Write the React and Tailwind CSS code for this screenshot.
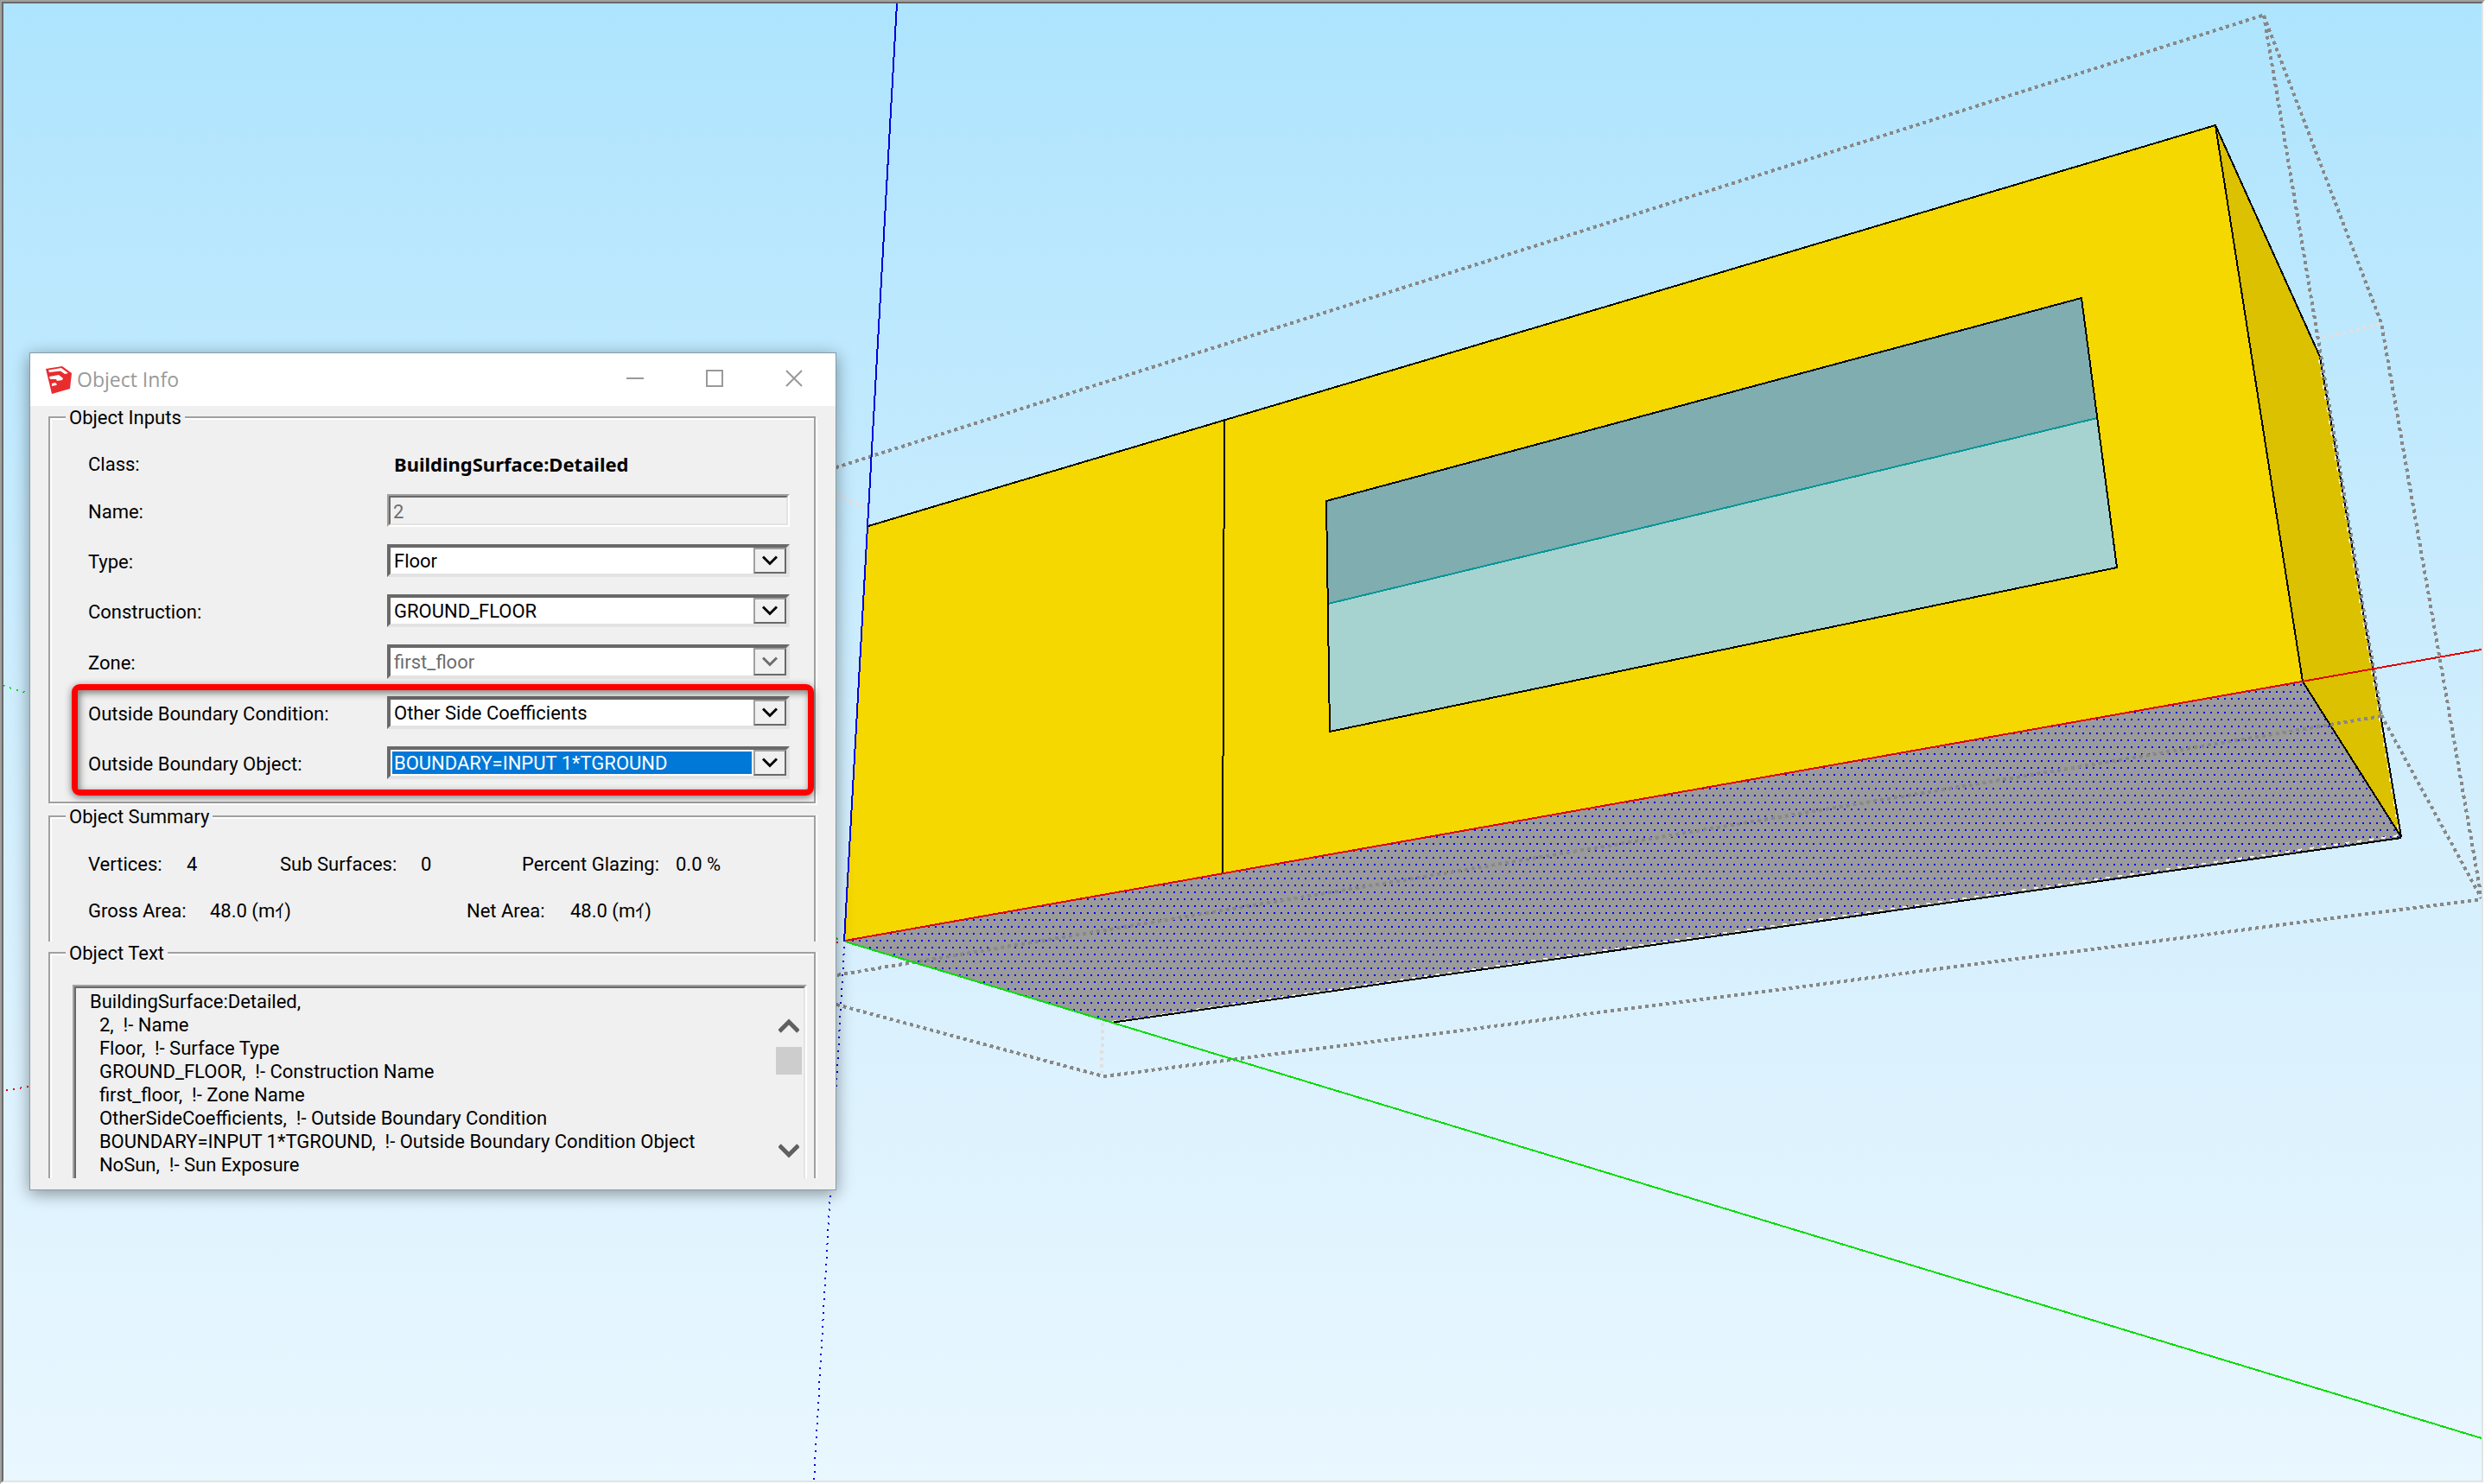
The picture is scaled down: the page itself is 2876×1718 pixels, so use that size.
import React from "react";

const outsideFields = [
  { id: "condition", label: "Outside Boundary Condition:", value: "Other Side Coefficients" },
  { id: "object", label: "Outside Boundary Object:", value: "BOUNDARY=INPUT 1*TGROUND", selected: true },
];

const surfaceFields = [
  { id: "type", label: "Type:", value: "Floor" },
  { id: "construction", label: "Construction:", value: "GROUND_FLOOR" },
  { id: "zone", label: "Zone:", value: "first_floor", disabled: true },
];

const objectText = [
  "BuildingSurface:Detailed,",
  "  2,  !- Name",
  "  Floor,  !- Surface Type",
  "  GROUND_FLOOR,  !- Construction Name",
  "  first_floor,  !- Zone Name",
  "  OtherSideCoefficients,  !- Outside Boundary Condition",
  "  BOUNDARY=INPUT 1*TGROUND,  !- Outside Boundary Condition Object",
  "  NoSun,  !- Sun Exposure",
].join("\n");

// 3D viewport: sky, axes, the building and its dotted bounding box
const Scene = () => (
  <svg
    className="absolute inset-0 w-full h-full"
    viewBox="0 0 2876 1718"
    preserveAspectRatio="none"
    shapeRendering="crispEdges"
    fill="none"
    strokeWidth="2"
    aria-hidden="true"
  >
    <defs>
      <linearGradient id="sky" x1="0" y1="0" x2="0" y2="1">
        <stop offset="0" stopColor="#aee4fe" />
        <stop offset="0.58" stopColor="#d5effd" />
        <stop offset="1" stopColor="#e9f7ff" />
      </linearGradient>
      <pattern id="selection" width="8" height="16" patternUnits="userSpaceOnUse">
        <rect width="8" height="16" fill="#9b9b9b" />
        <rect x="2" y="0" width="2" height="2" fill="#0000ff" />
        <rect x="6" y="8" width="2" height="2" fill="#0000ff" />
      </pattern>
    </defs>
    <rect width="2876" height="1718" fill="url(#sky)" />

    {/* faces */}
    <polygon points="1005,609 2564,146 2665,789 978,1089" fill="#f5d800" />
    <polygon points="2564,146 2686,415 2779,969 2665,789" fill="#dbc100" />
    <polygon points="978,1089 2665,789 2779,969 1286,1184" fill="url(#selection)" />
    <polygon points="1535,580 2409,345 2427,484 1537,699" fill="#7fadb0" />
    <polygon points="1537,699 2427,484 2450,657 1539,847" fill="#a6d3cf" />
    <path d="M1537 699L2427 484" stroke="#009696" />

    {/* edges */}
    <path d="M2684 417L2777 967L1286 1183" stroke="#f5f0e0" strokeDasharray="5 9" />
    <g stroke="#000">
      <path d="M1005 609L2564 145L2665 789" />
      <path d="M1417 487L1415 1011" />
      <path d="M2564 145L2685 413L2779 969L2665 789" />
      <path d="M2779 970L1286 1184" />
      <polygon points="1535,580 2409,345 2450,657 1539,847" />
    </g>

    {/* bounding box */}
    <g stroke="#888" strokeWidth="4" strokeDasharray="4 4">
      <path d="M2618 18L968 541" />
      <path d="M2620 18L2756 828" />
      <path d="M2620 18L2756 374L2872 1040" />
      <path d="M2756 828L2872 1040" />
      <path d="M2756 829L968 1129" />
      <path d="M968 1163L1277 1246L2872 1041" />
    </g>
    <g stroke="#e3dfdf" strokeWidth="4" strokeDasharray="4 4">
      <path d="M2688 391L2754 375" />
      <path d="M1276 1184L1275 1242" />
      <path d="M968 573L1002 588" />
    </g>

    {/* axes */}
    <path d="M978 1089L2872 752" stroke="#e00000" />
    <path d="M978 1090L2872 1665" stroke="#00dc00" />
    <path d="M977 1090L1038 4" stroke="#0000dc" />
    <g strokeDasharray="2 6">
      <path d="M977 1096L942 1714" stroke="#0000dc" />
      <path d="M970 1091L4 1263" stroke="#e00000" />
      <path d="M970 1087L4 794" stroke="#00dc00" />
    </g>
  </svg>
);

const AppIcon = () => (
  <svg className="w-[30px] h-[32px]" viewBox="0 0 30 32" aria-hidden="true">
    <path d="M0 3L19 0L30 8L28 26L7 32Z" fill="#e92c2e" />
    <path d="M3 4.500L18 2L26 8L22 9L17 5.500L4 7Z" fill="#fff" />
    <path d="M4 12L15 10L20 14L19 16L13 17L12 15L5 15Z" fill="#fff" />
    <path d="M7 20L11 19L13 21L12 22L7 23Z" fill="#fff" />
  </svg>
);

const WindowButton = ({ label, children }) => (
  <button className="w-[92px] h-full pb-[3px] flex items-center justify-center" aria-label={label}>
    <svg
      className="w-5 h-5"
      viewBox="0 0 20 20"
      fill="none"
      stroke="#999"
      strokeWidth="2"
      aria-hidden="true"
    >
      {children}
    </svg>
  </button>
);

const Group = ({ title, className, bodyClassName, children }) => (
  <fieldset className={`border-2 border-[#a0a0a0] ${className}`}>
    <legend className="ml-[18px] px-1 h-[26px] leading-7 bg-[#f0f0f0]">{title}</legend>
    <div className={bodyClassName}>{children}</div>
  </fieldset>
);

const SelectRow = ({ id, label, value, disabled, selected }) => (
  <div className="grid grid-cols-[346px_1fr] items-center">
    <label htmlFor={id} className="pt-0.5">{label}</label>
    <div
      className={`flex border-4 border-t-[#696969] border-l-[#696969] border-r-[#e3e3e3] border-b-[#e3e3e3] bg-white ${
        disabled ? "h-10" : "h-[38px]"
      }`}
    >
      <div className="flex-1 p-0.5 flex">
        <select
          id={id}
          disabled={disabled}
          defaultValue={value}
          className={`w-full appearance-none pl-0.5 pt-0.5 leading-6 opacity-100 outline-none ${
            selected ? "bg-[#0078d7] text-white" : disabled ? "text-[#6d6d6d]" : "text-black"
          }`}
        >
          <option>{value}</option>
        </select>
      </div>
      <span className="w-[38px] flex items-center justify-center bg-[#f0f0f0] border-2 border-t-[#a0a0a0] border-l-[#a0a0a0] border-r-[#696969] border-b-[#696969] pointer-events-none">
        <svg className="w-[18px] h-3" viewBox="0 0 18 12" fill="none" aria-hidden="true">
          <path d="M1 1.500L9 9.500L17 1.500" stroke={disabled ? "#6d6d6d" : "#000"} strokeWidth="3" />
        </svg>
      </span>
    </div>
  </div>
);

const ScrollArrow = ({ label, d }) => (
  <button className="h-[18px] flex justify-center" aria-label={label}>
    <svg className="w-6 h-[18px]" viewBox="0 0 24 18" fill="none" aria-hidden="true">
      <path d={d} stroke="#606060" strokeWidth="5" />
    </svg>
  </button>
);

const ObjectInfo = () => (
  <section className="absolute left-[34px] top-[408px] w-[934px] border border-[#8a9ba5] bg-[#f0f0f0] text-black text-[22px] font-['Roboto','Noto_Sans_CJK_JP',sans-serif] shadow-[0_4px_18px_rgba(0,0,0,0.4)]">
    <header className="h-[61px] bg-white flex items-center pl-[18px] pr-0.5">
      <AppIcon />
      <h1 className="flex-1 pl-[6px] text-[23px] text-[#999] font-['Open_Sans',sans-serif]">Object Info</h1>
      <WindowButton label="Minimize">
        <path d="M0 10H20" />
      </WindowButton>
      <WindowButton label="Maximize">
        <rect x="1" y="1" width="18" height="18" />
      </WindowButton>
      <WindowButton label="Close">
        <path d="M1 1L19 19M19 1L1 19" />
      </WindowButton>
    </header>

    <div className="pl-[21px] pr-[23px] pb-[13px]">
      <Group
        title="Object Inputs"
        className="mb-0.5 shadow-[2px_2px_0_#fff,inset_2px_2px_0_#fff]"
        bodyClassName="pt-7 pb-[26px] pl-[44px] pr-7"
      >
        <div className="flex flex-col gap-5">
          <div className="grid grid-cols-[346px_1fr] h-7 leading-7">
            <span>Class:</span>
            <strong className="pl-2 leading-[26px] font-bold font-['Noto_Sans',sans-serif]">
              BuildingSurface:Detailed
            </strong>
          </div>
          <div className="grid grid-cols-[346px_1fr] items-center">
            <label htmlFor="name" className="pt-0.5">Name:</label>
            <div className="h-[38px] border-2 border-t-[#a0a0a0] border-l-[#a0a0a0] border-r-white border-b-white">
              <input
                id="name"
                defaultValue="2"
                disabled
                className="block w-full h-full pl-[3px] pt-0.5 border-2 border-t-[#696969] border-l-[#696969] border-r-[#e3e3e3] border-b-[#e3e3e3] text-[#6d6d6d]"
              />
            </div>
          </div>
          {surfaceFields.map((field) => (
            <SelectRow key={field.id} {...field} />
          ))}
          <div className="relative flex flex-col gap-5">
            {outsideFields.map((field) => (
              <SelectRow key={field.id} {...field} />
            ))}
            {/* red highlight round the boundary fields */}
            <div className="absolute -left-[19px] -right-7 -top-[14px] -bottom-[19px] border-[7px] border-[#ff0000] rounded-[9px] pointer-events-none shadow-[0_2px_8px_rgba(0,0,0,0.5),inset_2px_3px_8px_rgba(0,0,0,0.5)]" />
          </div>
        </div>
      </Group>

      <Group
        title="Object Summary"
        className="border-b-0 shadow-[2px_0_0_#fff,inset_2px_2px_0_#fff]"
        bodyClassName="pt-4 pb-2 pl-[44px]"
      >
        <div className="grid grid-cols-[114px_108px_163px_117px_178px_1fr] leading-[54px]">
          <span>Vertices:</span>
          <span>4</span>
          <span>Sub Surfaces:</span>
          <span>0</span>
          <span>Percent Glazing:</span>
          <span>0.0 %</span>
        </div>
        <div className="grid grid-cols-[141px_297px_120px_1fr] h-[54px] leading-[54px]">
          <span>Gross Area:</span>
          <span>48.0 (mｲ)</span>
          <span>Net Area:</span>
          <span>48.0 (mｲ)</span>
        </div>
      </Group>

      <Group
        title="Object Text"
        className="border-b-0 shadow-[2px_0_0_#fff,inset_2px_2px_0_#fff]"
        bodyClassName="pt-6 pl-[26px] pr-2"
      >
        <div className="border-t-2 border-l-2 border-r-2 border-t-[#a0a0a0] border-l-[#a0a0a0] border-r-white">
          <div className="flex h-[222px] border-t-2 border-l-2 border-r-2 border-t-[#696969] border-l-[#696969] border-r-[#e3e3e3]">
            <textarea
              readOnly
              aria-label="Object text"
              value={objectText}
              className="flex-1 resize-none overflow-hidden pt-0.5 pl-4 leading-[27px] whitespace-pre outline-none"
            />
            <div className="w-[30px] mr-0.5 pt-[34px] pb-[22px] flex flex-col">
              <ScrollArrow label="Scroll up" d="M1 16L12 5L23 16" />
              <div className="h-8 mt-4 mb-auto bg-[#cdcdcd]" />
              <ScrollArrow label="Scroll down" d="M1 2L12 13L23 2" />
            </div>
          </div>
        </div>
      </Group>
    </div>
  </section>
);

const App = () => {
  return (
    <main className="relative min-h-screen overflow-hidden">
      <Scene />
      {/* sunken frame of the viewport */}
      <div className="absolute inset-0 border-2 border-t-[#a0a0a0] border-l-[#a0a0a0] border-r-white border-b-white">
        <div className="w-full h-full border-2 border-t-[#696969] border-l-[#696969] border-r-[#e3e3e3] border-b-[#e3e3e3]" />
      </div>
      <ObjectInfo />
    </main>
  );
};

export default App;
